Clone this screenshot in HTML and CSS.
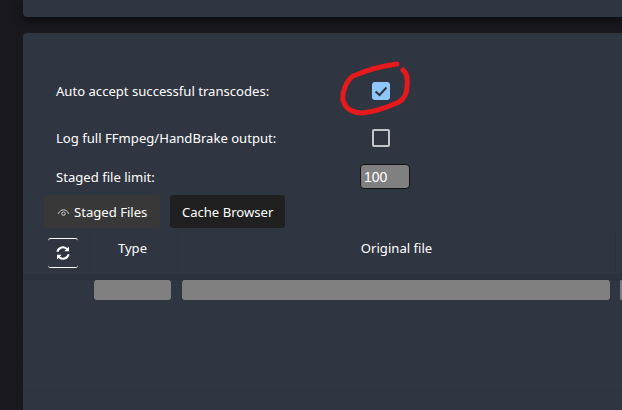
FILE: index.html
```html
<!DOCTYPE html>
<html lang="en">
<head>
<meta charset="utf-8">
<title>Transcode settings</title>
<link rel="stylesheet" href="styles.css">
</head>
<body>
<div class="page">
  <div class="card card-top"></div>
  <section class="card card-main">
    <div class="settings">
      <div class="row row-auto">
        <label class="label">Auto accept successful transcodes:</label>
        <span class="check checked">
          <svg viewBox="0 0 18 18" width="18" height="18"><path d="M3.500 9.500L7.500 13L14.500 5.500" fill="none" stroke="#2f3541" stroke-width="2"/></svg>
        </span>
      </div>
      <div class="row row-log">
        <label class="label">Log full FFmpeg/HandBrake output:</label>
        <span class="check"></span>
      </div>
      <div class="row row-limit">
        <label class="label">Staged file limit:</label>
        <input class="limit" type="text" value="100">
      </div>
    </div>
    <div class="tabs">
      <button class="tab tab-active">
        <svg class="eye" viewBox="0 0 14 10" width="13" height="9"><path d="M1 6.500C3 3 5 2 7 2s4 1 6 4.500" fill="none" stroke="#d8d8d8" stroke-width="1.100"/><circle cx="7" cy="6.300" r="1.900" fill="none" stroke="#d8d8d8" stroke-width="1.100"/></svg>
        Staged Files
      </button>
      <button class="tab tab-cache">Cache Browser</button>
    </div>
    <div class="table">
      <div class="thead">
        <div class="cell-action">
          <button class="refresh">
            <svg viewBox="0 0 16 16" width="16" height="16"><path d="M2.400 6.800A5.700 5.700 0 0 1 12.400 4.400M13.600 9.200A5.700 5.700 0 0 1 3.600 11.600" fill="none" stroke="#fff" stroke-width="2"/><path d="M14 1.600v4.600H9.400zM2 14.400V9.800h4.600z" fill="#fff"/></svg>
          </button>
        </div>
        <div class="th th-type">Type</div>
        <div class="th">Original file</div>
        <div class="th"></div>
      </div>
      <div class="tfilter">
        <div class="cell-action"></div>
        <div class="fcell"><span class="finput"></span></div>
        <div class="fcell"><span class="finput"></span></div>
        <div class="fcell"><span class="finput"></span></div>
      </div>
      <div class="tline"></div>
      <div class="tline"></div>
      <div class="tline"></div>
    </div>
  </section>
</div>
<svg class="scribble" viewBox="340 60 72 56" width="72" height="56">
  <path d="M397 64C380 66 365 71 353 76C346 81 342 92 343 100C345 110 355 113 362 113C375 112 388 107 399 102C406 98 408 88 407 78C407 75 405 72 403 70" fill="none" stroke="#e61a1c" stroke-width="5" stroke-linecap="round" stroke-linejoin="round"/>
</svg>
</body>
</html>
```
FILE: styles.css
```css
* { box-sizing: border-box; }
html, body { margin: 0; height: 100%; }
body {
  background: #18181e;
  font-family: "Noto Sans", "Open Sans", sans-serif;
  font-size: 13.1px;
  color: #fff;
  overflow: hidden;
  position: relative;
}
.page {
  padding-left: 23px;
  display: flex;
  flex-direction: column;
  gap: 16px;
}
.card {
  background: #2f3541;
}
.card-top {
  height: 17px;
  border-radius: 0 0 0 4px;
  box-shadow: 0 4px 8px rgba(0, 0, 0, 0.5);
}
.card-main {
  height: 377px;
  border-radius: 4px 0 0 0;
  padding-top: 49px;
}
.settings {
  display: flex;
  flex-direction: column;
}
.row {
  display: flex;
  align-items: center;
  padding-left: 33px;
}
.row-log { margin-top: 29px; }
.row-limit { margin-top: 17px; }
.label {
  width: 304px;
  line-height: 18px;
}
.check {
  width: 18px;
  height: 18px;
  margin-left: 12px;
  border: 2px solid #c3c5c9;
  border-radius: 2px;
  display: block;
}
.check.checked {
  border: 0;
  background: #8fc7fb;
  border-radius: 3px;
}
.check svg { display: block; }
.limit {
  width: 50px;
  height: 25px;
  background: #808080;
  border: 1px solid #111;
  border-radius: 4px;
  color: #fff;
  font: 14px "Liberation Sans", sans-serif;
  padding: 2px 3px;
}
.tabs {
  display: flex;
  gap: 10px;
  padding-left: 21px;
  margin-top: 6px;
}
.tab {
  height: 33px;
  background: #202020;
  border: 0;
  border-radius: 3px;
  color: #fff;
  font: inherit;
  padding: 0 12px;
  display: flex;
  align-items: center;
  gap: 4px;
}
.tab-active { background: #383838; padding: 0 13px; }
.tab-cache { padding: 0 11.500px; }
.eye { margin-top: 2px; }
.table {
  margin-top: 4px;
}
.thead, .tfilter {
  display: grid;
  grid-template-columns: 66px 88px 438px 1fr;
}
.thead { height: 42px; }
.cell-action {
  padding-top: 6px;
}
.refresh {
  width: 30px;
  height: 30px;
  margin-left: 25px;
  background: transparent;
  border: 0;
  border-top: 1px solid #fff;
  border-bottom: 1px solid #fff;
  border-radius: 3px;
  padding: 0;
  display: flex;
  align-items: center;
  justify-content: center;
}
.th {
  text-align: center;
  padding-top: 7px;
  line-height: 18px;
  border-left: 1px solid #2d333e;
}
.th-type { padding-right: 2px; }
.tfilter {
  height: 31px;
  padding-top: 6px;
  background: linear-gradient(#2c323d 6px, #2f3541 6px);
}
.fcell { padding: 0 5px; }
.fcell:nth-child(2) { padding-right: 6px; }
.fcell:nth-child(4) { padding-right: 0; }
.finput {
  display: block;
  height: 20px;
  background: #808080;
  border-radius: 3px;
}
.tline {
  height: 29px;
  border-bottom: 1px solid #2e343f;
}
.scribble {
  position: absolute;
  left: 340px;
  top: 60px;
}
```
